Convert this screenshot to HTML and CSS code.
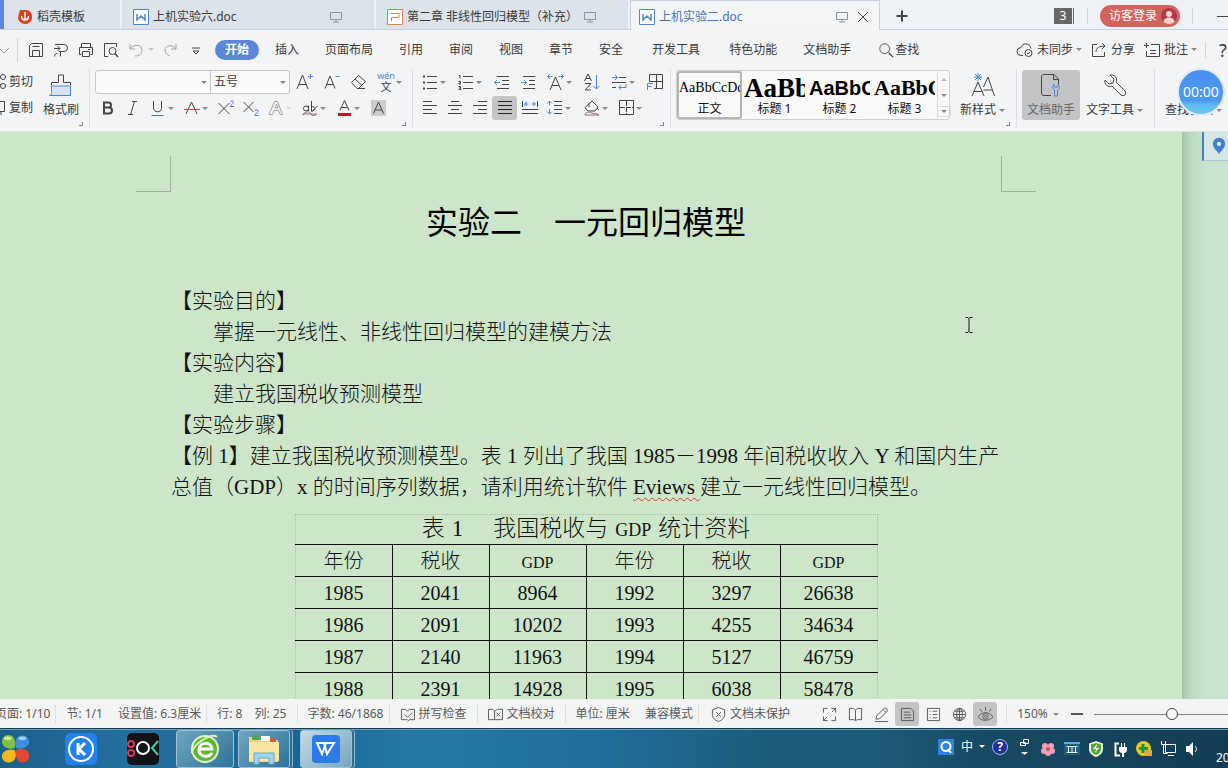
FILE: index.html
```html
<!DOCTYPE html>
<html lang="zh-CN">
	<head>
		<meta charset="utf-8">
		<title>上机实验二.doc</title>
		<link rel="stylesheet" href="styles.css">
	</head>
	<body>
		<!-- 标签栏 -->
		<div class="tabs">
			<div class="tab-edge"></div>
			<div class="tab tab-home">
				<svg class="icon" viewBox="0 0 16 16"><path d="M3 1h6c4 0 6 3 6 7s-3 7-7 7-7-3-7-7z" fill="#d9431e" stroke="none"/><path d="M8 3v8M4.500 7c0 3 1.500 4 3.500 4s3.500-1 3.500-4" stroke="#fff" stroke-width="1.500"/></svg>
				<span>稻壳模板</span>
			</div>
			<div class="tab">
				<svg class="icon blue" viewBox="0 0 16 16"><path d="M.5.5h15v15H.5z" fill="#fff"/><path d="M4 5v6l4-4 4 4V5" stroke-width="1.500"/></svg>
				<span>上机实验六.doc</span>
				<svg class="screen" viewBox="0 0 12 12"><path d="M.5 1.500h11v7H.5zM6 8.500v2M3 11h6"/></svg>
			</div>
			<div class="tab">
				<svg class="icon orange" viewBox="0 0 16 16"><path d="M.5.5h15v15H.5z" fill="#fff"/><path d="M4 4.500h8v4H4.500V12"/></svg>
				<span class="tight">第二章 非线性回归模型（补充）</span>
				<svg class="screen" viewBox="0 0 12 12"><path d="M.5 1.500h11v7H.5zM6 8.500v2M3 11h6"/></svg>
			</div>
			<div class="tab cur">
				<svg class="icon blue" viewBox="0 0 16 16"><path d="M.5.5h15v15H.5z" fill="#fff"/><path d="M4 5v6l4-4 4 4V5" stroke-width="1.500"/></svg>
				<span>上机实验二.doc</span>
				<svg class="screen" viewBox="0 0 12 12"><path d="M.5 1.500h11v7H.5zM6 8.500v2M3 11h6"/></svg>
				<button class="close" aria-label="关闭"><svg viewBox="0 0 12 12"><path d="M1 1l10 10M11 1L1 11"/></svg></button>
			</div>
			<button class="add" aria-label="新建"><svg viewBox="0 0 12 12"><path d="M6 .5v11M.5 6h11" stroke-width="2"/></svg></button>
			<div class="tabs-right">
				<span class="count">3</span>
				<span class="vline"></span>
				<button class="login">访客登录 <svg viewBox="0 0 16 16"><circle cx="8" cy="8" r="8" fill="#b23a48" stroke="none"/><circle cx="8" cy="6" r="3" fill="#f4d5d6" stroke="none"/><path d="M2.500 14c0-6 11-6 11 0-3 2.500-8 2.500-11 0z" fill="#f4d5d6" stroke="none"/></svg></button>
				<span class="vline"></span>
				<button class="min" aria-label="最小化"><svg viewBox="0 0 12 12"><path d="M0 6.500h12"/></svg></button>
			</div>
		</div>

		<!-- 菜单栏 -->
		<div class="menu">
			<div class="quick">
				<button aria-label="文件"><svg viewBox="0 0 18 18"><path d="M3 7l5 5 5-5" stroke="#999"/></svg></button>
				<span class="vline"></span>
				<button aria-label="保存"><svg viewBox="0 0 18 18"><path d="M2.500 4.500l2-2h11v13h-13zM5.500 15.500v-6h7v6M5.500 5.500h7"/></svg></button>
				<button aria-label="输出"><svg viewBox="0 0 18 18"><path d="M3 3.500h9a3.500 3.500 0 010 7H8.500v5M7 10.500h2M2 7.500h6M5.500 5L8 7.500 5.500 10M2.500 15.500c0-2 1-3 3-3"/></svg></button>
				<button aria-label="打印"><svg viewBox="0 0 18 18"><path d="M4.500 6.500v-4h9v4M4.500 13.500h-2v-7h13v7h-2M5.500 10.500h7v5h-7zM11 8.500h2"/></svg></button>
				<button aria-label="预览"><svg viewBox="0 0 18 18"><path d="M6 15.500H2.500v-13h12V6"/><circle cx="10.500" cy="10" r="3.500"/><path d="M13 12.500l3 3.500" stroke-width="1.500"/></svg></button>
				<button class="dim" aria-label="撤销"><svg viewBox="0 0 18 18"><path d="M3 3v5h5M3 8c3-5 12-5 12 1 0 4-3 6-7 6"/></svg></button>
				<i class="caret dimc"></i>
				<button class="dim redo" aria-label="恢复"><svg viewBox="0 0 18 18"><path d="M14 3v5H9M14 8C11 3 3 4 3 9c0 3 2 5 5 6"/></svg></button>
				<button aria-label="更多"><svg viewBox="0 0 18 18"><path d="M5 7h8M6 10l3 3 3-3z"/></svg></button>
			</div>
			<a class="cur" href="#">开始</a>
			<a href="#">插入</a>
			<a href="#">页面布局</a>
			<a href="#">引用</a>
			<a href="#">审阅</a>
			<a href="#">视图</a>
			<a href="#">章节</a>
			<a href="#">安全</a>
			<a class="wide" href="#">开发工具</a>
			<a class="wide" href="#">特色功能</a>
			<a href="#">文档助手</a>
			<button class="find"><svg viewBox="0 0 18 18"><circle cx="7.500" cy="7.500" r="5.500"/><path d="M12 12l5 5" stroke-width="1.500"/></svg>查找</button>
			<div class="menu-right">
				<button><svg viewBox="0 0 18 18"><path d="M7 14.500H5a4 4 0 010-8c1-5 9-5 10 1"/><circle cx="12.500" cy="12" r="3.500"/><path d="M11 12l1 1 2-2"/></svg>未同步<i class="caret"></i></button>
				<button><svg viewBox="0 0 18 18"><path d="M7 3.500H2.500v12h12V11M6 11c0-4 3-6 9-6M12 2l3 3-3 3"/></svg>分享</button>
				<button><svg viewBox="0 0 18 18"><path d="M8 3.500h8.500v12h-13V10M7 9.500h6M7 12.500h6M1 4.500h5M3.500 2v5"/></svg>批注<i class="caret"></i></button>
				<span class="vline"></span>
				<button class="help">?</button>
			</div>
		</div>

		<!-- 功能区 -->
		<div class="ribbon">
			<div class="group clip">
				<div class="cutcopy">
					<button><svg viewBox="0 0 18 18"><path d="M3 3l9 9M3 13l9-9"/><circle cx="14" cy="4" r="2.500"/><circle cx="14" cy="13" r="2.500"/></svg>剪切</button>
					<button><svg viewBox="0 0 18 18"><path d="M3.500 2.500h12v10h-12zM12 12v4"/></svg>复制</button>
				</div>
				<button class="big"><svg viewBox="0 0 24 24"><path d="M2.500 12v-2.500h7V2h5v7.500h7V12"/><path d="M2.500 13h19v9.500h-21c2 0 2-2 2-3z" fill="#d7e3f7" stroke="#4d86d9"/></svg>格式刷</button>
				<i class="corner"></i>
			</div>
			<div class="group font">
				<div class="row row1">
					<div class="combo"><label class="sel sel-name"><select aria-label="字体"><option></option></select></label><label class="sel sel-size"><select aria-label="字号"><option>五号</option></select></label></div>
					<button aria-label="增大字号"><svg viewBox="0 0 18 18"><path d="M1 16L6.500 2 12 16M3 11.500h7"/><path d="M12 3.500h5M14.500 1v5" stroke="#4d86d9"/></svg></button>
					<button aria-label="减小字号"><svg viewBox="0 0 18 18"><path d="M2 15.500L7 3l5 12.500M4 11.500h6"/><path d="M12.500 3.500h4" stroke="#4d86d9"/></svg></button>
					<button aria-label="清除格式"><svg viewBox="0 0 18 18"><path d="M1.500 9.500l7-7 7 6-7 7H7zM5 6l7 6.500M7 15.500h8"/></svg></button>
					<button class="drop pinyin" aria-label="拼音"><span><b>wén</b>文</span><i class="caret"></i></button>
				</div>
				<div class="row">
					<button aria-label="加粗"><svg viewBox="0 0 18 18"><path d="M5 3.500h4.500a2.500 2.500 0 010 5H5zM5 8.500h5a3 3 0 010 6H5z" stroke-width="2"/></svg></button>
					<button aria-label="倾斜"><svg viewBox="0 0 18 18"><path d="M8 2.500h5M4 15.500h5M10.500 2.500l-4 13"/></svg></button>
					<button class="drop" aria-label="下划线"><svg viewBox="0 0 18 18"><path d="M4.500 2v7c0 5 8 5 8 0V2"/><path d="M2.500 16.500h12" stroke="#4d6fb5"/></svg><i class="caret"></i></button>
					<button class="drop" aria-label="删除线"><svg viewBox="0 0 18 18"><path d="M3 15L8.500 3 14 15"/><path d="M1 10.500h16" stroke="#c0504d"/></svg><i class="caret"></i></button>
					<button aria-label="上标"><svg viewBox="0 0 18 18"><path d="M1.500 4l11 11M12.500 4l-11 11"/><path d="M13.500 3c.5-2 3.500-1 3 .5-.5 1.500-3 2-3 4h3.500" stroke="#4d6fd9"/></svg></button>
					<button aria-label="下标"><svg viewBox="0 0 18 18"><path d="M1.500 3l10 10M11.500 3l-10 10"/><path d="M13 12c.5-2 3.500-1 3 .5-.5 1.500-3 2-3 4h3.500" stroke="#4d6fd9"/></svg></button>
					<button class="drop dim" aria-label="文字效果"><svg viewBox="0 0 18 18"><path d="M2 15.500L7.500 2.500h3l5 13H13l-1.500-4H7l-1.500 4zM8 9h3L9.500 5z"/></svg><i class="caret dimc"></i></button>
					<button class="drop" aria-label="突出显示"><svg viewBox="0 0 18 18"><circle cx="5" cy="9.500" r="2.500"/><path d="M7.500 6.500V12M10.500 2v10M10.500 8c3-2 5 4 0 4M16.500 7l-6 6"/><path d="M2 16c2-4 7-4 8-1s5 1 6 0H2z" stroke="#8a6f7a"/></svg><i class="caret"></i></button>
					<button class="drop" aria-label="字体颜色"><svg viewBox="0 0 18 18"><path d="M5 11.500l4.500-10 4.500 10M6.500 8.500h6"/><path d="M3 15.500h13" stroke="#c8101e" stroke-width="3"/></svg><i class="caret"></i></button>
					<button aria-label="字符底纹"><svg viewBox="0 0 18 18"><path d="M2 1h15v16H2z" fill="#ccc" stroke="none"/><path d="M4.500 14.500L9.500 3l5 11.500M6 11h7"/></svg></button>
				</div>
				<i class="corner"></i>
			</div>
			<div class="group para">
				<div class="row row1">
					<button class="drop" aria-label="项目符号"><svg viewBox="0 0 18 18"><path d="M6 3.500h10M6 9.500h10M6 15.500h10"/><path d="M2 3.500h2M2 9.500h2M2 15.500h2" stroke-width="2"/></svg><i class="caret"></i></button>
					<button class="drop" aria-label="编号"><svg viewBox="0 0 18 18"><path d="M6 3.500h10M6 9.500h10M6 15.500h10M2 2.500h1v3M1.500 8.500h2v1.500H2v1h2M1.500 13.500h2v3h-2M2 15h1"/></svg><i class="caret"></i></button>
					<button aria-label="减少缩进"><svg viewBox="0 0 18 18"><path d="M4 3.500h12M9 7.500h7M9 11.500h7M4 15.500h12"/><path d="M7 9.500H1.500M4 7L1.500 9.500 4 12" stroke="#4d86d9"/></svg></button>
					<button aria-label="增加缩进"><svg viewBox="0 0 18 18"><path d="M3 3.500h12M9 7.500h6M9 11.500h6M3 15.500h12"/><path d="M1 9.500h5.500M4 7l2.500 2.500L4 12" stroke="#4d86d9"/></svg></button>
					<button class="drop" aria-label="字符缩放"><svg viewBox="0 0 18 18"><path d="M3 17L8.500 4 14 17M5 12.500h7"/><path d="M5.500 3.500h-5M3 1L.5 3.500 3 6M11.500 3.500h5M14 1l2.500 2.500L14 6" stroke="#4d86d9"/></svg><i class="caret"></i></button>
					<button aria-label="排序"><svg viewBox="0 0 18 18"><path d="M1.500 8L5 1l3.500 7M3 5.500h4M2 10.500h6l-6 6.500h6"/><path d="M13.500 2v14M10.500 13l3 3 3-3" stroke="#4d86d9"/></svg></button>
					<button class="drop" aria-label="换行"><svg viewBox="0 0 18 18"><path d="M9 4.500h7M2 9.500h14M2 14.500h4"/><path d="M2 4.500h5M5 2l2.500 2.500L5 7M16 11v3.500H9M11 12l-2 2.500 2 2.500" stroke="#4d86d9"/></svg><i class="caret"></i></button>
					<button aria-label="制表位"><svg viewBox="0 0 18 18"><path d="M3.500 8V1.500h13v14H8M10.500 1.500v14M3.500 8.500h13"/><path d="M1.500 17V10.500H7M1.500 13.500h4" stroke="#4d86d9"/></svg></button>
				</div>
				<div class="row">
					<button aria-label="左对齐"><svg viewBox="0 0 18 18"><path d="M2 2.500h9M2 6.500h14M2 10.500h9M2 14.500h14"/></svg></button>
					<button aria-label="居中"><svg viewBox="0 0 18 18"><path d="M5 2.500h8M2 6.500h14M5 10.500h8M2 14.500h14"/></svg></button>
					<button aria-label="右对齐"><svg viewBox="0 0 18 18"><path d="M7 2.500h9M2 6.500h14M7 10.500h9M2 14.500h14"/></svg></button>
					<button class="on" aria-label="两端对齐"><svg viewBox="0 0 18 18"><path d="M2 2.500h14M2 6.500h14M2 10.500h14M2 14.500h14" stroke="#222"/></svg></button>
					<button aria-label="分散对齐"><svg viewBox="0 0 18 18"><path d="M1.500 2v6M16.500 2v6M1 10.500h16M1 14.500h16"/><path d="M3.500 5h4M6 3L3.500 5 6 7M14.500 5h-4M12 3l2.500 2L12 7" stroke="#4d86d9"/></svg></button>
					<button class="drop" aria-label="行距"><svg viewBox="0 0 18 18"><path d="M8 2.500h8M8 6.500h8M8 10.500h8M8 14.500h8"/><path d="M3.500 2v4.500M1 4.500L3.500 2 6 4.500M3.500 10v5M1 12.500L3.500 15 6 12.500" stroke="#4d86d9"/></svg><i class="caret"></i></button>
					<button class="drop sp" aria-label="底纹颜色"><svg viewBox="0 0 18 18"><path d="M2 8.500l7-6.500 6 6-3 4H5zM6 4v4M14 9l2 2"/><path d="M2 16c1-4 5-3 7-2s5 0 7 2z" stroke="#8a6f7a"/></svg><i class="caret"></i></button>
					<button class="drop" aria-label="边框"><svg viewBox="0 0 18 18"><path d="M2.500 1.500h14v14h-14z"/><path d="M9.500 2v13M3 8.500h13" stroke-dasharray="5 1"/></svg><i class="caret"></i></button>
				</div>
				<i class="corner"></i>
			</div>
			<div class="group style">
				<div class="gallery">
					<button class="sample s0 on"><span>AaBbCcDd</span>正文</button>
					<button class="sample s1"><span>AaBb</span>标题 1</button>
					<button class="sample s2"><span>AaBbC</span>标题 2</button>
					<button class="sample s3"><span>AaBbC</span>标题 3</button>
					<div class="scroll"><i class="up"></i><i class="caret"></i><i class="caret lined"></i></div>
				</div>
				<button class="big new"><svg viewBox="0 0 24 24"><path d="M1 23l6-14 6 14M3 18.500h8M12.500 14L17 4l6.500 19M12.500 17H21"/><path d="M7 0v8M3 4h8M4 1l6 6M10 1L4 7" stroke="#4d86d9"/></svg><span>新样式<i class="caret"></i></span></button>
				<i class="corner"></i>
			</div>
			<div class="group tools">
				<button class="big on"><svg viewBox="0 0 24 24"><path d="M12 22.500H5c-1.500 0-2.500-1-2.500-2.500V4c0-1.500 1-2.500 2.500-2.500h10l4.500 4.500v5M14.500 2v4.500h5"/><path d="M15 11c-2 2-2 5 .5 6v6h3v-6c2.500-1 2.500-4 .5-6v3h-4z" stroke="#4d86d9"/></svg>文档助手</button>
				<button class="big word"><svg viewBox="0 0 24 24"><path d="M7 2c4-1 8 3 6 7l9 9c2 3-1 6-4 4l-9-9C5 15 1 11 2 7l4 4 4-1 1-4z"/></svg><span>文字工具<i class="caret"></i></span></button>
			</div>
			<div class="group last">
				<button class="big"><svg viewBox="0 0 24 24"></svg><span>查找替换<i class="caret"></i></span></button>
			</div>
			<div class="timer">00:00</div>
		</div>

		<!-- 文档区 -->
		<div class="view">
			<div class="paper">
				<div class="marks"><i></i><i></i></div>
				<h1>实验二　一元回归模型</h1>
				<p>【实验目的】</p>
				<p class="in">掌握一元线性、非线性回归模型的建模方法</p>
				<p>【实验内容】</p>
				<p class="in">建立我国税收预测模型</p>
				<p>【实验步骤】</p>
				<p>【例 1】建立我国税收预测模型。表 1 列出了我国 1985－1998 年间税收收入 Y 和国内生产<br>总值（GDP）x 的时间序列数据，请利用统计软件 <u>Eviews </u>建立一元线性回归模型。</p>
				<table>
					<caption>表<b>1</b>　我国税收与<b><code>GDP</code></b>统计资料</caption>
					<tr><th>年份</th><th>税收</th><th><code>GDP</code></th><th>年份</th><th>税收</th><th><code>GDP</code></th></tr>
					<tr><td>1985</td><td>2041</td><td>8964</td><td>1992</td><td>3297</td><td>26638</td></tr>
					<tr><td>1986</td><td>2091</td><td>10202</td><td>1993</td><td>4255</td><td>34634</td></tr>
					<tr><td>1987</td><td>2140</td><td>11963</td><td>1994</td><td>5127</td><td>46759</td></tr>
					<tr><td>1988</td><td>2391</td><td>14928</td><td>1995</td><td>6038</td><td>58478</td></tr>
				</table>
			</div>
			<div class="side">
				<button class="pin" aria-label="定位"><svg viewBox="0 0 16 20"><path d="M8 19C5 15 1 12 1 7.500a7 7 0 0114 0C15 12 11 15 8 19z" fill="#3f7fd0" stroke="none"/><circle cx="8" cy="7.500" r="2.500" fill="#e6f0f5" stroke="none"/></svg></button>
			</div>
			<svg class="cursor" viewBox="0 0 8 16"><path d="M.5.5H3l1 1 1-1h2.500M4 1.500v13M.5 15.500H3l1-1 1 1h2.500" stroke="#111"/></svg>
		</div>

		<!-- 状态栏 -->
		<div class="status">
			<span class="page">页面: 1/10</span><span class="vline"></span>
			<span>节: 1/1</span><span class="set">设置值: 6.3厘米</span><span class="vline"></span>
			<span>行: 8</span><span class="col">列: 25</span><span class="vline far"></span>
			<span>字数: 46/1868</span><span class="vline"></span>
			<button><svg viewBox="0 0 16 16"><path d="M8 13.500H1.500v-11H6l2 2 2-2h5.500v11H10l-2 2M5 8l3 3 5-5"/></svg>拼写检查</button><span class="vline far"></span>
			<button><svg viewBox="0 0 16 16"><path d="M7 13.500H.5v-11H5l2 2M7 13.500h8.500v-11H10l-3 2v9M9 6l4 4M13 6l-4 4"/></svg>文档校对</button><span class="vline far"></span>
			<span>单位: 厘米</span><span class="mode">兼容模式</span><span class="vline"></span>
			<button class="guard"><svg viewBox="0 0 16 16"><path d="M8 .5l6.500 2.500v5c0 4-3 6-6.500 7.500C4.500 14 1.500 12 1.500 8V3zM5.500 5.500l5 5M10.500 5.500l-5 5"/></svg>文档未保护</button>
			<div class="views">
				<button aria-label="全屏"><svg viewBox="0 0 16 16"><path d="M1.500 6V1.500H6M10 1.500h4.500V6M14.500 1.500l-4 4M1.500 10v4.500H6M1.500 14.500l4-4M10 14.500h4.500V10"/></svg></button>
				<button aria-label="阅读"><svg viewBox="0 0 16 16"><path d="M8 14V3.500L6 1.500H1.500v12H6l2 1 2-1h4.500v-12H10l-2 2"/></svg></button>
				<button aria-label="写作"><svg viewBox="0 0 16 16"><path d="M2 13l1-4 8-7.500c2-1 4 1 3 3L6 12.500zM10 3l3 3M1 15.500h14"/></svg></button>
				<button class="on" aria-label="页面"><svg viewBox="0 0 16 16"><path d="M1.500 1.500h10l3 3v10h-13zM4 5.500h7M4 8.500h8M4 11.500h8"/></svg></button>
				<button aria-label="大纲"><svg viewBox="0 0 16 16"><path d="M1.500 1.500h13v13h-13zM4 4.500h1M7 4.500h5M4 8h1M7 8h5M4 11.500h1M7 11.500h5"/></svg></button>
				<button aria-label="Web"><svg viewBox="0 0 16 16"><circle cx="8" cy="8" r="6.500"/><ellipse cx="8" cy="8" rx="3" ry="6.500"/><path d="M1.500 8h13M8 1.500v13M2.500 4.500h11M2.500 11.500h11"/></svg></button>
				<button class="on" aria-label="护眼"><svg viewBox="0 0 16 16"><path d="M0 10.500c4-6 12-6 16 0-4 5-12 5-16 0zM8 4V0M4 5L2 2M12 5l2-3"/><circle cx="8" cy="10" r="3"/><circle cx="8" cy="10" r="1"/></svg></button>
				<span class="vline"></span>
				<button class="zoom">150%<i class="caret"></i></button>
				<button class="minus" aria-label="缩小"><svg viewBox="0 0 12 12"><path d="M0 6h12" stroke-width="2"/></svg></button>
				<input class="range" type="range" min="0" max="100" value="50" aria-label="缩放">
			</div>
		</div>

		<!-- 任务栏 -->
		<div class="task">
			<button class="start" aria-label="开始"><svg viewBox="0 0 32 32"><path d="M15 15C8 17 2 14 2 8S10-1 14 4c2 3 2 7 1 11z" fill="#7fc241"/><path d="M17 15c-3-5-1-13 6-13s9 8 5 11-8 3-11 2z" fill="#3d8fe0"/><path d="M15 17c3 5 1 13-6 13s-9-8-5-11 8-3 11-2z" fill="#f2b91c"/><path d="M17 17c5-3 13-1 13 6s-8 9-11 5-3-8-2-11z" fill="#e4492f"/><ellipse cx="8" cy="5" rx="4" ry="2" fill="#c9ec9b"/><ellipse cx="23" cy="5" rx="4" ry="2" fill="#a7d0f7"/></svg></button>
			<button class="app" aria-label="酷狗"><svg viewBox="0 0 32 32"><rect width="32" height="32" rx="5" fill="#2381ee"/><circle cx="16" cy="16" r="12" fill="none" stroke="#fff" stroke-width="2"/><path d="M13 10v12M20 10l-6 6 6 6" fill="none" stroke="#fff" stroke-width="3"/></svg></button>
			<button class="app" aria-label="录屏"><svg viewBox="0 0 32 32"><rect width="32" height="32" rx="5" fill="#111316"/><g fill="none" stroke-width="2"><circle cx="4" cy="11" r="3" stroke="#d9355f"/><circle cx="4" cy="20" r="3" stroke="#d9355f"/><circle cx="16" cy="15" r="6" stroke="#fff"/><path d="M31 8l-6 7 6 7" stroke="#45cfa5"/></g></svg></button>
			<button class="app box" aria-label="浏览器"><svg viewBox="0 0 32 32"><circle cx="16" cy="16" r="13" fill="#5cb82f" stroke="#dff3cd" stroke-width="2"/><path d="M23 20c-4 6-14 3-13-4s12-8 13 0H10" fill="none" stroke="#fff" stroke-width="3"/><path d="M3 20C2 13 22-1 28 4" fill="none" stroke="#d9f5bd" stroke-width="2"/></svg></button>
			<button class="app box stack" aria-label="资源管理器"><svg viewBox="0 0 32 32"><path d="M1 4h9l2 3h18v22H1z" fill="#f1d37c"/><path d="M4 2h7v5H4z" fill="#4ea45c"/><path d="M13 3h9v5h-9z" fill="#fff"/><path d="M22 5h6v4h-6z" fill="#d5574a"/><path d="M1 9h30v19H1z" fill="#fae6a3"/><path d="M6 31V20h20v11h-5v-6H11v6z" fill="#9dd4f1" stroke="#6ba8d1"/></svg></button>
			<button class="app box stack act" aria-label="WPS"><svg viewBox="0 0 32 32"><rect x="2" y="2" width="28" height="28" rx="4" fill="#2d7bea"/><path d="M7 10h7l3 11 7-11h-8l-4 11z" fill="none" stroke="#fff" stroke-width="2"/></svg></button>
			<div class="tray">
				<svg class="raised" viewBox="0 0 16 16"><path d="M0 0h16v16H0z" fill="#2b83e6"/><circle cx="8" cy="7.500" r="4.500" fill="none" stroke="#fff" stroke-width="2"/><path d="M10 10l3 4" stroke="#fff" stroke-width="2"/></svg>
				<span class="lang raised">中<i class="caret"></i></span>
				<span class="ask raised">?</span>
				<svg class="rest raised" viewBox="0 0 16 20"><path d="M7.500 2.500h5v4h-5zM4.500 5.500h5v3h-5z" fill="none" stroke="#fff"/><path d="M5 15h7l-3.500 3z" fill="#fff"/></svg>
				<svg viewBox="0 0 16 16"><g fill="#f2a0b4"><circle cx="5" cy="5" r="3"/><circle cx="11" cy="5" r="3"/><circle cx="4" cy="10" r="3"/><circle cx="12" cy="10" r="3"/><circle cx="8" cy="12" r="3"/></g><circle cx="8" cy="8" r="2" fill="#d5465f"/></svg>
				<svg viewBox="0 0 16 16"><path d="M0 2h16v12H0z" fill="#1e5d80"/><path d="M0 2h16" stroke="#56b1d4" stroke-width="2"/><path d="M2.500 5.500h11M2.500 11.500h11M4.500 5.500v6M11.500 5.500v6M8 5.500v6" stroke="#fff" fill="none"/></svg>
				<svg viewBox="0 0 16 16"><path d="M8 0l7 2.500V8c0 4-3 6.500-7 8-4-1.500-7-4-7-8V2.500z" fill="#e9f5d5"/><path d="M8 2l5 1.500V8c0 3-2 5-5 6-3-1-5-3-5-6V3.500z" fill="#54a637"/><path d="M9 3L5 8h3l-1 4 4-5H8z" fill="#fff"/></svg>
				<svg viewBox="0 0 16 16"><path d="M7 2.500H3.500v12H8" stroke="#fff" fill="none" stroke-width="2"/><path d="M7 6h8v4l-2 2h-1v4h-2v-4H9l-2-2zM9 2h1v4H9zM12 2h1v4h-1z" fill="#fff"/></svg>
				<svg viewBox="0 0 16 16"><circle cx="7.500" cy="7.500" r="7.500" fill="#e6ca1d"/><path d="M7 3v9M3 7.500h9" stroke="#1f9145" stroke-width="3"/><path d="M9 9h7v6H9z" fill="#f0a13c"/></svg>
				<svg viewBox="0 0 16 16"><path d="M5.500 3.500h10v8h-10zM8 14.500h6M1.500 0v3.500h4V0M3.500 3.500v9h4" stroke="#fff" fill="none"/></svg>
				<svg viewBox="0 0 16 16"><path d="M2 5h3l4-4v14l-4-4H2z" fill="#fff"/><path d="M11 5c2 2 2 4 0 6" stroke="#fff" fill="none"/></svg>
			</div>
			<div class="clock">2022</div>
		</div>
	</body>
</html>
```

FILE: styles.css
```css
*{
	margin: 0;
	padding: 0;
	box-sizing: border-box;
}
body{
	display: flex;
	flex-direction: column;
	height: 100vh;
	overflow: hidden;
	font: 12px/16px "Noto Sans", "Noto Sans CJK SC", sans-serif;
	color: #3a3a3a;
	background: #f3f4f5;
}
button{
	border: 0;
	background: none;
	font: inherit;
	color: inherit;
	white-space: nowrap;
	display: flex;
	align-items: center;
	justify-content: center;
}
svg{
	flex: none;
	fill: none;
	stroke: #444;
	display: block;
}
a{
	color: inherit;
	text-decoration: none;
}
.caret{
	flex: none;
	width: 0;
	height: 0;
	border: 3px solid transparent;
	border-top: 3px solid #888;
	border-bottom: 0;
}
.dimc, .dim{
	opacity: .45;
}
.vline{
	flex: none;
	width: 1px;
	height: 16px;
	background: #cfd2d6;
}

/* 标签栏 */
.tabs{
	flex: none;
	display: flex;
	height: 30px;
	background: #eef1f5;
	border-bottom: 1px solid #c6d0de;
}
.tab-edge{
	width: 4px;
	background: #5b87e0;
}
.tab{
	display: flex;
	align-items: center;
	width: 254px;
	padding: 4px 32px 0 11px;
	background: #dde3eb;
	border-right: 2px solid #eef1f5;
	white-space: nowrap;
}
.tab-home{
	width: 118px;
	padding: 4px 0 0 13px;
}
.tab .icon{
	width: 16px;
	height: 16px;
	margin-right: 4px;
}
.tab .blue{
	stroke: #4d86c9;
}
.tab .orange{
	stroke: #d98058;
}
.tab .screen{
	width: 12px;
	height: 12px;
	margin-left: auto;
	stroke: #8b929c;
}
.tab .tight + .screen{
	margin-left: 6px;
}
.tab.cur{
	width: 250px;
	height: 30px;
	padding: 3px 10px 0 8px;
	background: #f4f5f6;
	border: 1px solid #c6d0de;
	border-bottom: 0;
	color: #4477bd;
}
.close svg, .add svg, .min svg{
	width: 12px;
	height: 12px;
}
.close{
	margin-left: 9px;
}
.add{
	width: 44px;
	padding-top: 3px;
}
.tabs-right{
	display: flex;
	align-items: center;
	margin-left: auto;
	gap: 12px;
	padding-top: 2px;
}
.count{
	width: 21px;
	height: 16px;
	color: #fff;
	background: #666;
	border-right: 3px double #eef1f5;
	text-align: center;
}
.login{
	height: 22px;
	padding: 0 3px 0 9px;
	gap: 4px;
	border-radius: 11px;
	background: #d3635c;
	color: #fff;
}
.login svg{
	width: 16px;
	height: 16px;
}
.min{
	width: 27px;
	margin-right: -4px;
	padding-left: 8px;
}

/* 菜单栏 */
.menu{
	flex: none;
	display: flex;
	align-items: center;
	height: 38px;
	padding-top: 1px;
	white-space: nowrap;
}
.quick{
	display: flex;
	align-items: center;
	width: 215px;
	margin-right: -3px;
}
.quick button{
	width: 25px;
}
.quick button:first-child{
	margin-left: -8px;
}
.quick .vline{
	height: 24px;
	margin-right: 5px;
}
.quick svg, .menu-right svg, .find svg{
	width: 18px;
	height: 18px;
}
.quick .redo{
	margin-left: 4px;
}
.menu a{
	padding: 0 13px;
}
.menu a.cur{
	width: 44px;
	height: 20px;
	margin: 0 3px;
	padding: 2px 10px;
	border-radius: 10px;
	background: #5b87d9;
	color: #fff;
	font-weight: 700;
}
.menu a.wide{
	margin-left: 3px;
}
.find{
	margin-left: 14px;
}
.find svg{
	width: 16px;
	height: 16px;
	margin-right: 1px;
}
.menu-right{
	display: flex;
	align-items: center;
	gap: 8px;
	margin: 0 -4px 0 auto;
}
.menu-right button{
	gap: 3px;
}
.menu-right .help{
	width: 18px;
	font-size: 18px;
}

/* 功能区 */
.ribbon{
	flex: none;
	position: relative;
	display: flex;
	height: 64px;
	padding-top: 1px;
	border-bottom: 1px solid #dfe5df;
}
.group{
	position: relative;
	flex: none;
	height: 58px;
	border-right: 1px solid #dcdee1;
}
.corner{
	position: absolute;
	right: 6px;
	bottom: 1px;
	width: 4px;
	height: 4px;
	border: solid #888;
	border-width: 0 1px 1px 0;
}
.clip{
	display: flex;
	width: 90px;
}
.cutcopy{
	display: flex;
	flex-direction: column;
	width: 33px;
	align-items: flex-end;
}
.cutcopy button{
	height: 26px;
	gap: 2px;
}
.cutcopy svg{
	width: 18px;
	height: 18px;
}
.big{
	flex-direction: column;
	justify-content: flex-start;
	height: 50px;
	margin-top: 1px;
	padding: 3px 5px 0;
	gap: 5px;
}
.big svg{
	width: 24px;
	height: 24px;
}
.clip .big{
	margin-left: 5px;
}
.big span{
	display: flex;
	align-items: center;
	gap: 3px;
}
.on{
	background: #c3c4c6;
	border-radius: 3px;
}
.font{
	width: 323px;
	padding-left: 5px;
}
.para{
	width: 258px;
	padding-left: 4px;
}
.row{
	display: flex;
	align-items: center;
	height: 26px;
}
.row1{
	gap: 2px;
}
.row button{
	width: 25px;
	height: 24px;
}
.row .drop{
	width: 34px;
	gap: 1px;
	justify-content: flex-start;
	padding-left: 4px;
}
.row svg{
	width: 18px;
	height: 18px;
}
.row .sp{
	margin-left: 3px;
}
.combo{
	display: flex;
	width: 195px;
	height: 24px;
	border: 1px solid #c4c6c9;
	border-radius: 3px;
	background: #fafafa;
}
.sel{
	position: relative;
	flex: 1;
}
.sel-size{
	flex: none;
	width: 79px;
	border-left: 1px solid #c4c6c9;
}
.sel select{
	width: 100%;
	height: 22px;
	padding-left: 3px;
	border: 0;
	background: none;
	appearance: none;
	font: inherit;
	color: inherit;
}
.sel::after{
	content: "";
	position: absolute;
	right: 3px;
	top: 10px;
	border: 3px solid transparent;
	border-top-color: #888;
	border-bottom: 0;
}
.pinyin span{
	display: flex;
	flex-direction: column;
	width: 18px;
	align-items: center;
	font-size: 11px;
	line-height: 12px;
}
.pinyin b{
	font-size: 9px;
	line-height: 10px;
	font-weight: 400;
	color: #4d86d9;
}
.style{
	display: flex;
	width: 346px;
	padding-left: 5px;
}
.gallery{
	display: flex;
	height: 50px;
	width: 274px;
	margin-top: 1px;
	border: 1px solid #cccfd2;
	border-radius: 3px;
	background: #f9f9f9;
}
.sample{
	flex-direction: column;
	width: 65px;
	height: 48px;
	border: 2px solid transparent;
	color: #111;
}
.sample.on{
	border-color: #b5b5b5;
	background: #f9f9f9;
}
.sample span{
	width: 61px;
	height: 28px;
	line-height: 30px;
	overflow: hidden;
	text-align: left;
	color: #000;
	font-family: "Liberation Serif", serif;
}
.s0 span{
	font-size: 14px;
}
.s1 span{
	font-size: 27px;
	font-weight: 700;
}
.s2 span{
	font: 700 20px/30px "Liberation Sans", sans-serif;
}
.s3 span{
	font-size: 22px;
	font-weight: 700;
}
.scroll{
	flex: 1;
	display: flex;
	flex-direction: column;
	align-items: center;
	justify-content: space-around;
	border-left: 1px solid #dcdee1;
}
.up{
	border: 3px solid transparent;
	border-bottom-color: #bbb;
	border-top: 0;
}
.lined{
	outline: 1px solid #dcdee1;
	outline-offset: 3px;
}
.new{
	margin-left: 5px;
}
.tools{
	display: flex;
	width: 138px;
	padding-left: 5px;
}
.tools .on{
	width: 58px;
	color: #666;
}
.word{
	padding-left: 6px;
}
.last{
	border: 0;
	padding-left: 5px;
}
.timer{
	position: absolute;
	right: 3px;
	top: 0;
	width: 48px;
	height: 48px;
	border: 2px solid #dfeafa;
	border-radius: 50%;
	background: linear-gradient(#4a8ff0 0, #4b9bf2 70%, #63bdf0 80%, #6cc6f2);
	color: #fff;
	font-size: 14px;
	line-height: 44px;
	text-align: center;
}

/* 文档区 */
.view{
	flex: 1;
	position: relative;
	display: flex;
	min-height: 0;
	overflow: hidden;
	background: #cce6c8;
}
.paper{
	flex: 1;
	padding: 24px 181px 0 171px;
	background: #cde6c9;
	font: 300 21px/31px "Liberation Serif", "Noto Sans CJK SC", serif;
	color: #111;
	white-space: nowrap;
}
.marks{
	display: flex;
	justify-content: space-between;
	margin: 0 -35px;
}
.marks i{
	width: 35px;
	height: 36px;
	border: solid #9fb09c;
	border-width: 0 1px 1px 0;
}
.marks i:last-child{
	border-width: 0 0 1px 1px;
}
h1{
	margin-bottom: 32px;
	font-size: 32px;
	font-weight: 400;
	line-height: 62px;
	text-align: center;
	color: #000;
}
.in{
	padding-left: 42px;
}
u{
	text-decoration: underline wavy #d33 1px;
	text-underline-offset: 3px;
}
table{
	width: 583px;
	margin: 11px auto 0;
	border-collapse: collapse;
	table-layout: fixed;
	border: 1px dotted #a9bfa6;
}
caption{
	height: 30px;
	border: 1px dotted #a9bfa6;
	border-bottom: 0;
	font-size: 23px;
	line-height: 28px;
}
caption b{
	padding: 0 7px;
	font-weight: 400;
}
code{
	font-family: "Liberation Serif", serif;
	font-size: 16px;
	line-height: 16px;
}
caption code{
	font-size: 18px;
}
th, td{
	height: 32px;
	border: 1px solid #111;
	font-size: 20px;
	font-weight: 300;
	line-height: 30px;
	text-align: center;
}
tr > :first-child{
	border-left: 1px dotted #a9bfa6;
}
tr > :last-child{
	border-right: 1px dotted #a9bfa6;
}
.side{
	flex: none;
	width: 46px;
	background: linear-gradient(90deg, #a9c3ab, #bcd9bf 18%, #c9e3cd 50%);
}
.pin{
	width: 26px;
	height: 29px;
	margin-left: auto;
	padding-left: 6px;
	border-left: 2px solid #4682c4;
	border-bottom: 1px solid #a8c6d8;
	background: #d3e8e4;
}
.pin svg{
	width: 14px;
	height: 18px;
}
.cursor{
	position: absolute;
	left: 965px;
	top: 185px;
	width: 8px;
	height: 16px;
}

/* 状态栏 */
.status{
	flex: none;
	display: flex;
	align-items: center;
	height: 30px;
	padding-top: 1px;
	background: #f3f4f4;
	border-bottom: 1px solid #17384e;
	color: #5a5a5a;
	white-space: nowrap;
	overflow: hidden;
}
.status .page{
	margin-left: -5px;
}
.status .vline{
	margin: 0 10px 0 5px;
	height: 18px;
	background: #dcdee0;
}
.status .far{
	margin-left: 10px;
}
.status svg{
	width: 15px;
	height: 15px;
	stroke: #555;
}
.status button{
	gap: 4px;
}
.status .set, .status .mode{
	margin-left: 15px;
}
.status .col{
	margin-left: 12px;
}
.guard{
	margin-left: 2px;
}
.views{
	display: flex;
	align-items: center;
	gap: 2px;
	margin: 0 -22px 0 auto;
}
.views button{
	width: 24px;
	height: 24px;
}
.views .vline{
	margin: 0 7px;
}
.status .zoom{
	width: 44px;
	gap: 5px;
}
.status .minus{
	width: 24px;
	margin: 0 3px;
}
.minus svg{
	width: 12px;
	height: 12px;
}
.range{
	width: 156px;
	height: 14px;
	appearance: none;
	background: linear-gradient(#888, #888) center / 100% 1px no-repeat;
}
.range::-webkit-slider-thumb{
	appearance: none;
	width: 12px;
	height: 12px;
	border: 1px solid #444;
	border-radius: 50%;
	background: #f8f8f8;
}

/* 任务栏 */
.task{
	flex: none;
	display: flex;
	align-items: center;
	height: 39px;
	border-top: 1px solid #6aa3bf;
	background: linear-gradient(90deg, #1b5f88 0, #236f9d 10%, #1c6593 24%, #2679a6 34%, #1f6c99 50%, #1b5d7b 62%, #1d5a78 72%, #174a63 80%, #123d54);
}
.task svg{
	stroke: none;
}
.start svg, .app svg{
	width: 32px;
	height: 32px;
}
.app{
	width: 58px;
	height: 38px;
	margin-left: 4px;
}
.start{
	margin-right: 17px;
}
.start svg{
	width: 31px;
}
.box{
	border: 1px solid #9cc3d8;
	border-radius: 3px;
	background: linear-gradient(135deg, #6fa6bf, #2e7398);
}
.app + .box{
	margin-left: 4px;
}
.stack{
	width: 52px;
	box-shadow: 2px 0 #2a6d90, 3px 0 #8db8cc;
}
.act{
	background: linear-gradient(135deg, #c5dbe6, #79a5bd);
}
.app + .act{
	margin-left: 10px;
}
.tray{
	display: flex;
	align-items: center;
	gap: 8px;
	margin-left: auto;
	color: #fff;
}
.tray svg{
	width: 16px;
	height: 16px;
}
.tray .rest{
	height: 20px;
}
.tray .raised{
	margin-bottom: 5px;
}
.lang{
	display: flex;
	align-items: center;
	gap: 6px;
	margin: 0 -1px;
	font-size: 12px;
}
.lang .caret{
	border-top-color: #fff;
}
.ask{
	width: 16px;
	height: 16px;
	border-radius: 50%;
	background: #1f2f9e;
	border: 1px solid #a9b9e6;
	line-height: 14px;
	font-weight: 700;
	text-align: center;
}
.clock{
	width: 12px;
	margin-left: 16px;
	padding-top: 18px;
	color: #fff;
	overflow: hidden;
}
```
